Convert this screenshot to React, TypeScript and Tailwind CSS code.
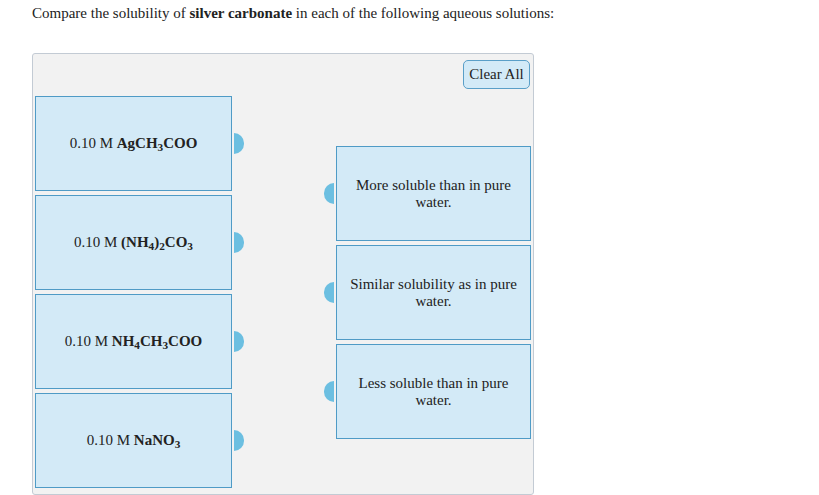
import React from "react";

const serif = "font-['Liberation_Serif',_'Times_New_Roman',_serif]";

function Knob({ side }: { side: "left" | "right" }) {
    return (
        <div
            className={
                side === "right"
                    ? "w-[10px] h-[21px] bg-[#6cbfe1] rounded-r-full"
                    : "w-[10px] h-[21px] bg-[#6cbfe1] rounded-l-full"
            }
        />
    );
}

function SourceBox({ children }: { children: React.ReactNode }) {
    return (
        <div className="flex items-center gap-[2px]">
            <div className="w-[197px] h-[95px] bg-[#d3eaf7] border border-[#4f9bc6] flex items-center justify-center text-[15px] text-[#222]">
                <span>{children}</span>
            </div>
            <Knob side="right" />
        </div>
    );
}

function TargetBox({ text }: { text: string }) {
    return (
        <div className="flex items-center gap-[2px]">
            <Knob side="left" />
            <div className="w-[195px] h-[95px] bg-[#d3eaf7] border border-[#4f9bc6] flex items-center justify-center px-[9px] text-center text-[15px] leading-[17px] text-[#222]">
                {text}
            </div>
        </div>
    );
}

export default function App() {
    return (
        <div className={`${serif} bg-white w-[819px] h-[495px] text-[#222]`}>
            <p className="pl-[32px] pt-[4px] text-[15px] leading-[18px]">
                Compare the solubility of <b>silver carbonate</b> in each of the following aqueous solutions:
            </p>

            <div className="ml-[32px] mt-[31px] w-[502px] h-[442px] bg-[#f2f2f2] border border-[#c3cbd4] rounded-[3px] flex flex-col">
                <div className="flex justify-end pt-[6px] pr-[3px]">
                    <button className="w-[67px] h-[29px] bg-[#d3eaf7] border border-[#5a9fc8] rounded-[5px] text-[15px] text-[#222]">
                        Clear All
                    </button>
                </div>

                <div className="flex mt-[7px]">
                    <div className="flex flex-col gap-[4px] ml-[2px]">
                        <SourceBox>
                            0.10 M <b>AgCH<sub>3</sub>COO</b>
                        </SourceBox>
                        <SourceBox>
                            0.10 M <b>(NH<sub>4</sub>)<sub>2</sub>CO<sub>3</sub></b>
                        </SourceBox>
                        <SourceBox>
                            0.10 M <b>NH<sub>4</sub>CH<sub>3</sub>COO</b>
                        </SourceBox>
                        <SourceBox>
                            0.10 M <b>NaNO<sub>3</sub></b>
                        </SourceBox>
                    </div>

                    <div className="flex flex-col gap-[4px] ml-auto mr-[2px] mt-[50px]">
                        <TargetBox text="More soluble than in pure water." />
                        <TargetBox text="Similar solubility as in pure water." />
                        <TargetBox text="Less soluble than in pure water." />
                    </div>
                </div>
            </div>
        </div>
    );
}
